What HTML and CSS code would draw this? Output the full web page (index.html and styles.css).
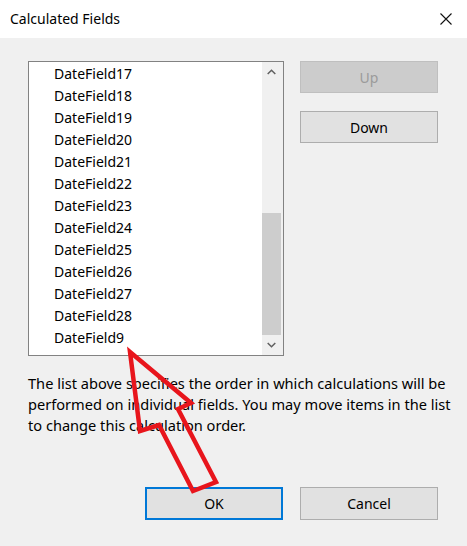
FILE: index.html
```html
<!DOCTYPE html>
<html>
<head>
<meta charset="utf-8">
<link rel="stylesheet" href="styles.css">
</head>
<body>
<div class="dialog">
  <div class="titlebar">
    <span class="title">Calculated Fields</span>
    <svg class="close" width="12" height="12" viewBox="0 0 12 12"><path d="M0.5 0.5 L11.5 11.5 M11.5 0.5 L0.5 11.5" stroke="#111" stroke-width="1.1" fill="none"/></svg>
  </div>
  <div class="content">
    <div class="toprow">
      <div class="listbox">
        <ul class="items">
          <li>DateField17</li>
          <li>DateField18</li>
          <li>DateField19</li>
          <li>DateField20</li>
          <li>DateField21</li>
          <li>DateField22</li>
          <li>DateField23</li>
          <li>DateField24</li>
          <li>DateField25</li>
          <li>DateField26</li>
          <li>DateField27</li>
          <li>DateField28</li>
          <li>DateField9</li>
        </ul>
        <div class="scrollbar">
          <div class="arrow">
            <svg width="9" height="6" viewBox="0 0 9 6"><path d="M0.7 5 L4.5 1.2 L8.3 5" stroke="#606060" stroke-width="1.5" fill="none"/></svg>
          </div>
          <div class="track"><div class="thumb"></div></div>
          <div class="arrow">
            <svg width="9" height="6" viewBox="0 0 9 6"><path d="M0.7 1 L4.5 4.8 L8.3 1" stroke="#606060" stroke-width="1.5" fill="none"/></svg>
          </div>
        </div>
      </div>
      <div class="sidebuttons">
        <button class="btn disabled">Up</button>
        <button class="btn">Down</button>
      </div>
    </div>
    <p class="note">The list above specifies the order in which calculations will be<br>performed on individual fields. You may move items in the list<br>to change this calculation order.</p>
    <div class="footer">
      <button class="btn default">OK</button>
      <button class="btn">Cancel</button>
    </div>
  </div>
  <svg class="annotation" width="467" height="546" viewBox="0 0 467 546">
    <polygon points="130,352 191,403 178,409 216,482 193,491 159,425 140,431" fill="none" stroke="#e8151c" stroke-width="4.5" stroke-linejoin="miter"/>
  </svg>
</div>
</body>
</html>
```

FILE: styles.css
```css
html, body {
  margin: 0;
  padding: 0;
}
body {
  width: 467px;
  height: 546px;
  background: #f0f0f0;
  font-family: "Noto Sans", "Open Sans", sans-serif;
  font-size: 14px;
  color: #000;
  overflow: hidden;
}
.dialog {
  position: relative;
  width: 467px;
  height: 546px;
}
.titlebar {
  height: 38px;
  background: #fff;
  display: flex;
  align-items: center;
  justify-content: space-between;
  padding: 0 15px 0 10px;
  box-sizing: border-box;
}
.title {
  font-size: 14px;
  color: #000;
  padding-bottom: 2px;
}
.close {
  display: block;
}
.content {
  padding: 23px 29px 0 28px;
}
.toprow {
  display: flex;
  gap: 16px;
  align-items: flex-start;
}
.listbox {
  width: 256px;
  height: 295px;
  box-sizing: border-box;
  border: 1px solid #828282;
  background: #fff;
  display: flex;
}
.items {
  list-style: none;
  margin: 0;
  padding: 1px 0 0 25px;
  flex: 1;
}
.items li {
  height: 22px;
  line-height: 22px;
  white-space: nowrap;
}
.scrollbar {
  width: 21px;
  background: #f0f0f0;
  display: flex;
  flex-direction: column;
}
.arrow {
  height: 20px;
  display: flex;
  align-items: center;
  justify-content: center;
  padding-right: 2px;
}
.track {
  flex: 1;
  display: flex;
  flex-direction: column;
  justify-content: flex-end;
}
.thumb {
  height: 122px;
  width: 19px;
  background: #cdcdcd;
}
.sidebuttons {
  display: flex;
  flex-direction: column;
  gap: 18px;
}
.btn {
  width: 138px;
  height: 33px;
  box-sizing: border-box;
  background: #e1e1e1;
  border: 1px solid #adadad;
  font-family: "Noto Sans", "Open Sans", sans-serif;
  font-size: 14px;
  color: #000;
  padding: 0;
  margin: 0;
}
.sidebuttons .btn {
  height: 32px;
}
.btn.disabled {
  background: #cccccc;
  border-color: #bfbfbf;
  color: #9b9b9b;
}
.btn.default {
  border: 2px solid #0078d7;
}
.note {
  margin: 17px -24px 0 0;
  line-height: 21px;
  font-size: 14.6px;
  white-space: nowrap;
}
.footer {
  margin-top: 51px;
  display: flex;
  justify-content: flex-end;
  gap: 17px;
}
.annotation {
  position: absolute;
  left: 0;
  top: 0;
  pointer-events: none;
}
```
